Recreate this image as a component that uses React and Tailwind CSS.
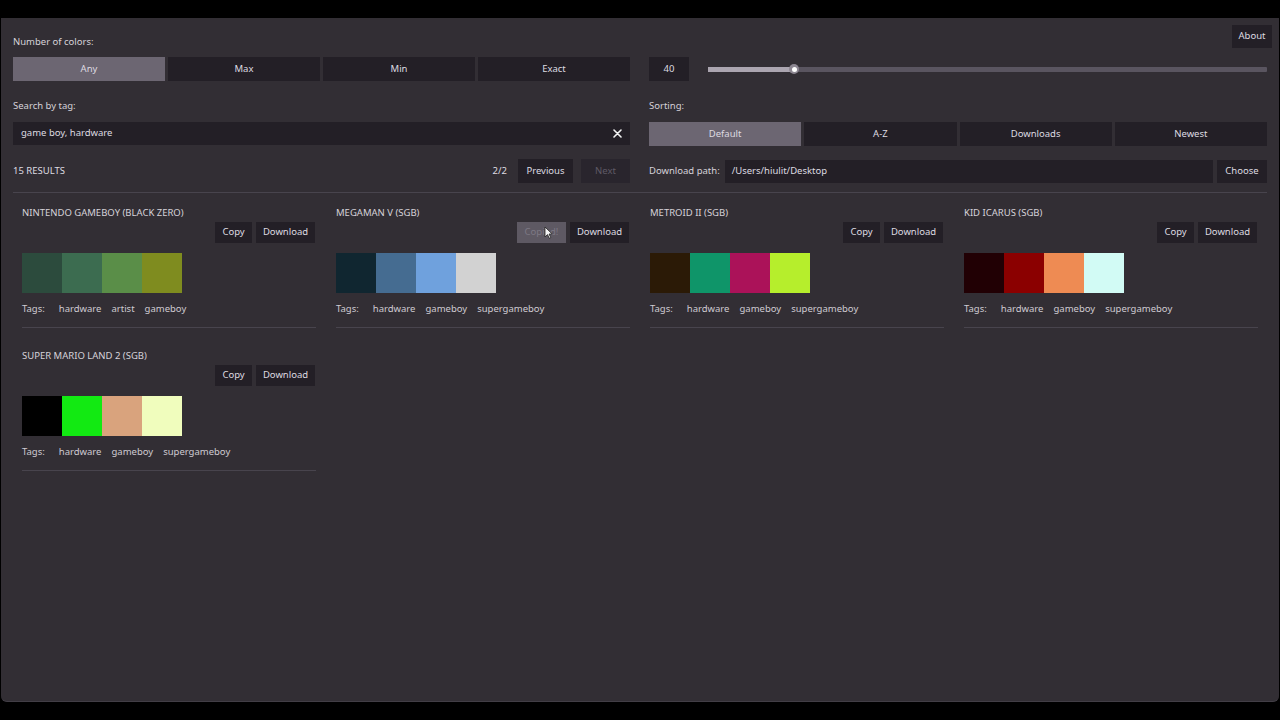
import React from "react";

const cards = [
  {
    title: "NINTENDO GAMEBOY (BLACK ZERO)",
    colors: ["#2c4b3d", "#3c6c50", "#5a8e48", "#7f8c1f"],
    tags: ["hardware", "artist", "gameboy"],
  },
  {
    title: "MEGAMAN V (SGB)",
    colors: ["#102630", "#456c91", "#6fa1dd", "#d2d2d2"],
    tags: ["hardware", "gameboy", "supergameboy"],
    copied: true,
  },
  {
    title: "METROID II (SGB)",
    colors: ["#2b1a06", "#0f9569", "#ab1259", "#b6ee2c"],
    tags: ["hardware", "gameboy", "supergameboy"],
  },
  {
    title: "KID ICARUS (SGB)",
    colors: ["#210004", "#8b0000", "#ee8b53", "#d2fbf5"],
    tags: ["hardware", "gameboy", "supergameboy"],
  },
  {
    title: "SUPER MARIO LAND 2 (SGB)",
    colors: ["#000000", "#12ea12", "#d9a37d", "#f0fdbd"],
    tags: ["hardware", "gameboy", "supergameboy"],
  },
];

function Seg({ items, active }) {
  return (
    <div className="flex gap-[3px] h-[24px]">
      {items.map((t, i) => (
        <div
          key={t}
          className={
            "flex-1 flex items-center justify-center " +
            (i === active ? "bg-[#6c6672] text-[#dedbe1]" : "bg-[#231f26] text-[#dedbe1]")
          }
        >
          {t}
        </div>
      ))}
    </div>
  );
}

function Card({ c }) {
  return (
    <div className="flex flex-col relative">
      <div className="h-[14px] leading-[14px] text-[#d6d2d9]">{c.title}</div>
      <div className="flex justify-end gap-[4px] mt-[2px] h-[21px] pr-[1px]">
        {c.copied ? (
          <div className="relative w-[49px] bg-[#5e5963] flex items-center justify-center text-[#7d7883]">
            Copied!
            <svg
              className="absolute left-[27px] top-[4px]"
              width="9"
              height="13"
              viewBox="0 0 9 13"
            >
              <path d="M1 1 L1 11 L3.5 8.6 L5.3 12.3 L6.8 11.6 L5 8 L8.2 8 Z" fill="#f4f4f4" stroke="#222" strokeWidth="0.8" />
            </svg>
          </div>
        ) : (
          <div className="w-[37px] bg-[#231f26] flex items-center justify-center text-[#dedbe1]">Copy</div>
        )}
        <div className="w-[59px] bg-[#231f26] flex items-center justify-center text-[#dedbe1]">Download</div>
      </div>
      <div className="flex mt-[10px]">
        {c.colors.map((col, i) => (
          <div key={i} className="w-[40px] h-[40px]" style={{ backgroundColor: col }} />
        ))}
      </div>
      <div className="flex mt-[9px] h-[14px] leading-[14px] text-[#cfcbd2]">
        <span className="mr-[14px]">Tags:</span>
        <div className="flex gap-[10px]">
          {c.tags.map((t) => (
            <span key={t}>{t}</span>
          ))}
        </div>
      </div>
      <div className="mt-[11px] h-px bg-[#48444d]" />
    </div>
  );
}

export default function App() {
  return (
    <div className="w-[1280px] h-[720px] bg-black pt-[18px] overflow-hidden font-['Noto_Sans',sans-serif] text-[9.5px]">
      <div className="mx-[1px] h-[684px] bg-[#322e34] rounded-b-[6px] border-b border-[#423e46] px-[12px] pt-[6px]">
        <div className="grid grid-cols-[617px_618px] gap-x-[19px]">
          {/* Row 1 */}
          <div className="h-[33px] pt-[11px] leading-[14px] text-[#d6d2d9]">Number of colors:</div>
          <div className="h-[33px] flex justify-end pt-[1px]">
            <div className="h-[23px] w-[40px] -mr-[5px] bg-[#231f26] flex items-center justify-center text-[#dedbe1]">About</div>
          </div>
          {/* Row 2 */}
          <Seg items={["Any", "Max", "Min", "Exact"]} active={0} />
          <div className="flex items-center h-[24px]">
            <div className="w-[40px] h-[24px] bg-[#231f26] flex items-center justify-center text-[#dedbe1]">40</div>
            <div className="ml-[19px] flex-1 relative h-[5px] bg-[#5a5560] rounded-[1px]">
              <div className="absolute left-0 top-0 h-[5px] w-[86px] bg-[#aba5b0]" />
              <div className="absolute left-[81px] top-[-2.5px] w-[10px] h-[10px] rounded-full bg-[#8d8792] flex items-center justify-center">
                <div className="w-[5px] h-[5px] rounded-full bg-white" />
              </div>
            </div>
          </div>
          {/* Row 3 */}
          <div className="h-[41px] pt-[18px] leading-[14px] text-[#d6d2d9]">Search by tag:</div>
          <div className="h-[41px] pt-[18px] leading-[14px] text-[#d6d2d9]">Sorting:</div>
          {/* Row 4 */}
          <div className="h-[23px] bg-[#231f26] flex items-center justify-between pl-[8px] pr-[8px]">
            <span className="text-[#dedbe1]">game boy, hardware</span>
            <svg width="9" height="9" viewBox="0 0 9 9">
              <path d="M1 1 L8 8 M8 1 L1 8" stroke="#f2f2f2" strokeWidth="1.6" strokeLinecap="round" />
            </svg>
          </div>
          <Seg items={["Default", "A-Z", "Downloads", "Newest"]} active={0} />
          {/* Row 5 */}
          <div className="mt-[13px] h-[24px] flex items-center">
            <span className="text-[#dedbe1]">15 RESULTS</span>
            <div className="ml-auto flex items-center h-full">
              <span className="text-[#dedbe1] mr-[11px]">2/2</span>
              <div className="w-[55px] h-full bg-[#231f26] flex items-center justify-center text-[#dedbe1]">Previous</div>
              <div className="ml-[8px] w-[49px] h-full bg-[#29252d] flex items-center justify-center text-[#5f5a66]">Next</div>
            </div>
          </div>
          <div className="mt-[13px] h-[24px] flex items-center">
            <span className="text-[#d6d2d9]">Download path:</span>
            <div className="ml-[5px] flex-1 h-[23px] bg-[#231f26] flex items-center pl-[7px] text-[#dedbe1]">/Users/hiulit/Desktop</div>
            <div className="ml-[4px] w-[50px] h-[23px] bg-[#231f26] flex items-center justify-center text-[#dedbe1]">Choose</div>
          </div>
        </div>
        <div className="mt-[9px] h-px bg-[#48444d]" />
        <div className="pl-[9px] pt-[13px] grid grid-cols-[294px_294px_294px_294px] gap-x-[20px] gap-y-[21px]">
          {cards.map((c) => (
            <Card key={c.title} c={c} />
          ))}
        </div>
      </div>
    </div>
  );
}
